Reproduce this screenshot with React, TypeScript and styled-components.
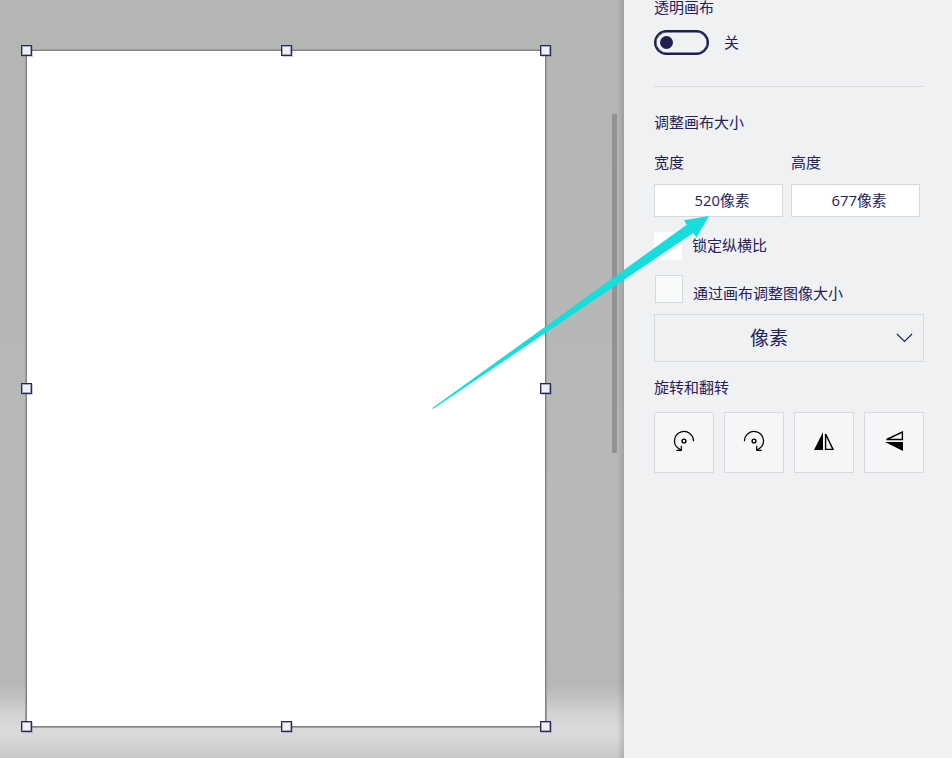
import React from 'react';
import styled, { createGlobalStyle } from 'styled-components';

const GlobalStyle = createGlobalStyle`
  * { box-sizing: border-box; }
  html, body { margin: 0; padding: 0; overflow: hidden; }
  button { padding: 0; font: inherit; color: inherit; }
`;

const Editor = styled.div`
  position: relative;
  display: flex;
  width: 952px;
  height: 758px;
  overflow: hidden;
  color: #24215a;
  font: 400 15px/16px 'Noto Sans', 'Noto Sans CJK SC', sans-serif;
`;

const Workspace = styled.main`
  position: relative;
  flex: 1;
  padding: 49px 0 0 25px;
  background: linear-gradient(#b4b6b4 0, #b6b8b6 350px, #b8bab8 600px, #b6b8b6 684px, #c0c2c1 697px, #d1d2d1 713px, #dadada 730px, #d5d6d5 742px, #c6c8c7 758px);
`;

const EdgeShade = styled.div`
  position: absolute;
  inset: 0 0 0 auto;
  width: 7px;
  background: linear-gradient(90deg, rgba(80, 82, 81, 0), rgba(80, 82, 81, 0.22));
`;

const Scrollbar = styled.div`
  position: absolute;
  top: 114px;
  right: 7px;
  width: 5px;
  height: 339px;
  background: #929392;
`;

const Canvas = styled.div`
  position: relative;
  width: 522px;
  height: 679px;
  border: 1px solid #a0a1a1;
  background: #fff;
  box-shadow: inset 0 0 0 1px #7f8080;
`;

const Handle = styled.span<{ $col: number; $row: number }>`
  position: absolute;
  left: ${(p) => [-5, 255, 514][p.$col]}px;
  top: ${(p) => [-5, 333, 671][p.$row]}px;
  width: 11px;
  height: 11px;
  border: 1px solid #29265a;
  background: #eff0f2;
  box-shadow: inset 0 0 0 1px #a4a4bd, 1px 1px 0 rgba(90, 85, 150, 0.3);
`;

const Panel = styled.aside`
  width: 328px;
  padding-left: 30px;
  background: #f0f1f3;
`;

const Label = styled.div<{ $top?: number }>`
  height: 16px;
  margin-top: ${(p) => p.$top ?? 0}px;
  white-space: nowrap;
`;

const FirstLabel = styled(Label)`
  height: 15px;
  line-height: 14px;
`;

const ToggleRow = styled.div`
  display: flex;
  align-items: center;
  gap: 15px;
  margin-top: 15px;
  > span { padding-bottom: 2px; }
`;

const Toggle = styled.button`
  display: flex;
  align-items: center;
  width: 55px;
  height: 25px;
  padding-left: 4px;
  border: 2px solid #211e52;
  border-radius: 13px;
  background: transparent;
  box-shadow: inset 0 0 0 0.5px #211e52;
`;

const Knob = styled.span`
  width: 13px;
  height: 13px;
  border-radius: 50%;
  background: #211e52;
`;

const Divider = styled.div`
  width: 270px;
  height: 1px;
  margin-top: 31px;
  background: #d7d8dc;
`;

const Fields = styled.div`
  display: grid;
  grid-template-columns: 129px 129px;
  gap: 14px 8px;
  margin-top: 24px;
`;

const SizeField = styled.div`
  height: 33px;
  padding-left: 7px;
  border: 1px solid #d5d7e1;
  background: #fff;
  font-family: 'Open Sans', 'Noto Sans CJK SC', sans-serif;
  font-size: 14.8px;
  line-height: 31px;
  text-align: center;
`;

const CheckRow = styled.label<{ $top: number; $indent?: number; $drop?: number; $lift?: number }>`
  display: flex;
  align-items: center;
  gap: 10px;
  height: 28px;
  margin-top: ${(p) => p.$top}px;
  padding-left: ${(p) => p.$indent ?? 0}px;
  > span:last-child { padding: ${(p) => p.$drop ?? 0}px 0 ${(p) => p.$lift ?? 0}px; }
`;

const CheckBox = styled.span<{ $outlined?: boolean }>`
  width: 28px;
  height: 28px;
  border: 1px solid ${(p) => (p.$outlined ? '#d5d7e3' : '#fff')};
  background: ${(p) => (p.$outlined ? '#f9fafa' : '#fff')};
`;

const UnitSelect = styled.button`
  display: flex;
  align-items: center;
  width: 270px;
  height: 48px;
  margin-top: 11px;
  padding-right: 10px;
  border: 1px solid #d5d7e1;
  background: transparent;
  font-size: 19px;
  > span { flex: 1; padding-right: 13px; text-align: center; }
`;

const Actions = styled.div`
  display: flex;
  gap: 10px;
  margin-top: 17px;
`;

const Action = styled.button`
  display: grid;
  place-items: center;
  width: 60px;
  height: 61px;
  padding-bottom: 3px;
  border: 1px solid #d9dadd;
  background: #f5f6f8;
`;

const Pointer = styled.svg`
  position: absolute;
  left: 432px;
  top: 216px;
  pointer-events: none;
`;

const RotateIcon = ({ clockwise = false }: { clockwise?: boolean }) => (
  <svg width="22" height="22" viewBox="0 0 22 22" fill="none" stroke="#000" strokeWidth="1.2">
    <g transform={clockwise ? 'translate(22 0) scale(-1 1)' : undefined}>
      <path d="M20.5 11.3A9.5 9.5 0 1 0 3.2 16.4Q5 18.4 8 20M3.3 20.4h5v-4.6" />
      <circle cx="11" cy="11" r="1.9" strokeWidth="1.4" />
    </g>
  </svg>
);

const FlipHorizontalIcon = () => (
  <svg width="20" height="20" viewBox="0 0 20 20">
    <path d="M9 1v18H0Z" />
    <path d="M11.6 3v15.4H19Z" fill="none" stroke="#000" strokeWidth="1.4" />
  </svg>
);

const FlipVerticalIcon = () => (
  <svg width="20" height="20" viewBox="0 0 20 20">
    <path d="M1 11h18v9Z" />
    <path d="M2.5 8.5h15.9V1Z" fill="none" stroke="#000" strokeWidth="1.4" />
  </svg>
);

const handles = [[0, 0], [1, 0], [2, 0], [0, 1], [2, 1], [0, 2], [1, 2], [2, 2]];

export default function App() {
  return (
    <Editor>
      <GlobalStyle />
      <Workspace>
        <Canvas>
          {handles.map(([col, row]) => <Handle key={`${col}-${row}`} $col={col} $row={row} />)}
        </Canvas>
        <Scrollbar />
        <EdgeShade />
      </Workspace>
      <Panel>
        <FirstLabel>透明画布</FirstLabel>
        <ToggleRow>
          <Toggle aria-label="透明画布"><Knob /></Toggle>
          <span>关</span>
        </ToggleRow>
        <Divider />
        <Label $top={27}>调整画布大小</Label>
        <Fields>
          <Label>宽度</Label>
          <Label>高度</Label>
          <SizeField>520像素</SizeField>
          <SizeField>677像素</SizeField>
        </Fields>
        <CheckRow $top={15} $lift={2}><CheckBox /><span>锁定纵横比</span></CheckRow>
        <CheckRow $top={15} $indent={1} $drop={8}>
          <CheckBox $outlined /><span>通过画布调整图像大小</span>
        </CheckRow>
        <UnitSelect>
          <span>像素</span>
          <svg width="17" height="10" viewBox="0 0 17 10" fill="none" stroke="#211e52" strokeWidth="1.1">
            <path d="m1 1 7.5 7.5L16 1" />
          </svg>
        </UnitSelect>
        <Label $top={17}>旋转和翻转</Label>
        <Actions>
          <Action><RotateIcon /></Action>
          <Action><RotateIcon clockwise /></Action>
          <Action><FlipHorizontalIcon /></Action>
          <Action><FlipVerticalIcon /></Action>
        </Actions>
      </Panel>
      <Pointer width="278" height="194" viewBox="0 0 278 194">
        <path d="M.3 192 254.7 8.7 252 4.3 277 0 264.5 21.5 261.3 17 1 193Z" fill="#18dddd" />
      </Pointer>
    </Editor>
  );
}
